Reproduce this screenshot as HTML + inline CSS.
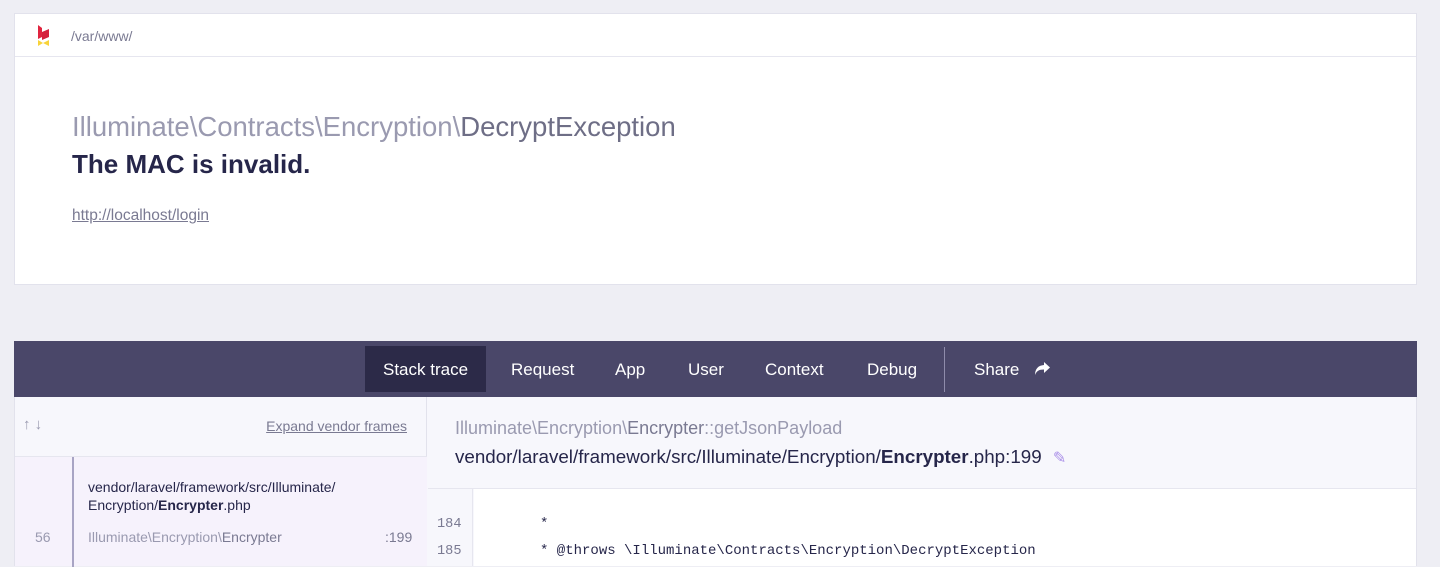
<!DOCTYPE html>
<html><head><style>
*{box-sizing:border-box;margin:0;padding:0}
body{width:1440px;height:566px;overflow:hidden;background:#eeeef4;font-family:"Liberation Sans",sans-serif;position:relative}
.top{position:absolute;left:14px;top:13px;width:1403px;height:272px;background:#fff;border:1px solid #e2e2ec}
.bar{height:43px;border-bottom:1px solid #e6e6ef;position:relative}
.path{position:absolute;left:56px;top:14px;font-size:14px;color:#7a7a92}
.exc{position:absolute;left:57px;top:97px;font-size:27.5px;color:#9a9ab0}
.exc b{font-weight:normal;color:#6e6e86}
.msg{position:absolute;left:57px;top:135px;font-size:26px;font-weight:bold;color:#26264a}
.url{position:absolute;left:57px;top:193px;font-size:15.5px;color:#7a7a92;text-decoration:underline}
.nav{position:absolute;left:14px;top:341px;width:1403px;height:56px;background:#4a4769}
.tab{position:absolute;top:5px;height:46px;line-height:48px;color:#fff;font-size:17px;padding:0 18px}
.panel{position:absolute;left:14px;top:397px;width:1403px;height:169px;background:#f7f7fc;border-left:1px solid #e2e2ec;border-right:1px solid #e2e2ec}
.left{position:absolute;left:0;top:0;width:412px;height:169px;border-right:1px solid #e2e2ec}
.code{position:absolute;left:413px;top:91px;right:0;bottom:0;border-top:1px solid #e6e6ef}
.gut{position:absolute;left:0;top:0;width:45px;bottom:0;border-right:1px solid #e6e6ef}
.cw{position:absolute;left:46px;top:0;right:0;bottom:0;background:#fff}
.mono{font-family:"Liberation Mono",monospace;font-size:14px;color:#26264a}
</style></head><body>
<div class="top">
 <div class="bar">
  <svg style="position:absolute;left:22px;top:9px" width="14" height="24" viewBox="0 0 14 24"><path d="M1 2l4 3v9l-4 2z" fill="#e0243f"/><path d="M5 9l7-3v8l-7 3z" fill="#d4203c"/><path d="M1 17l5 3 6-3v6l-6-3-5 3z" fill="#f8d33a"/></svg>
  <div class="path">/var/www/</div>
 </div>
 <div class="exc">Illuminate\Contracts\Encryption\<b>DecryptException</b></div>
 <div class="msg">The MAC is invalid.</div>
 <div class="url">http://localhost/login</div>
</div>
<div class="nav">
 <div class="tab" style="left:351px;background:#2c2a48">Stack trace</div>
 <div class="tab" style="left:479px">Request</div>
 <div class="tab" style="left:583px">App</div>
 <div class="tab" style="left:656px">User</div>
 <div class="tab" style="left:733px">Context</div>
 <div class="tab" style="left:835px">Debug</div>
 <div style="position:absolute;left:930px;top:6px;width:1px;height:45px;background:#8f8cab"></div>
 <div class="tab" style="left:942px">Share <svg style="margin-left:10px;vertical-align:-1px" width="17" height="15" viewBox="0 0 17 15"><path d="M10 1l6 5.5-6 5.5V8.5C5 8.5 2.5 10 1 14c0-6 3-9.5 9-10z" fill="#fff"/></svg></div>
</div>
<div class="panel">
 <div class="left">
  <div style="position:absolute;left:8px;top:19px;color:#9a9ab0;font-size:15px">&#8593; &#8595;</div>
  <div style="position:absolute;right:19px;top:21px;font-size:14px;color:#7a7a92;text-decoration:underline">Expand vendor frames</div>
  <div style="position:absolute;left:0;top:59px;width:412px;height:110px;background:#f6f2fc;border-top:1px solid #e6e6ef"></div>
  <div style="position:absolute;left:57px;top:60px;width:2px;height:110px;background:#a8a4c4"></div>
  <div style="position:absolute;left:73px;top:81px;font-size:14px;line-height:18px;color:#26264a">vendor/laravel/framework/src/Illuminate/<br>Encryption/<b>Encrypter</b>.php</div>
  <div style="position:absolute;left:73px;top:132px;font-size:14px;color:#9a9ab0">Illuminate\Encryption\<span style="color:#7a7a92">Encrypter</span></div>
  <div style="position:absolute;left:370px;top:132px;font-size:14px;color:#7a7a92">:199</div>
  <div style="position:absolute;left:20px;top:132px;font-size:14px;color:#9a9ab0">56</div>
 </div>
 <div style="position:absolute;left:440px;top:21px;font-size:18px;color:#9a9ab0">Illuminate\Encryption\<span style="color:#7a7a92">Encrypter</span>::getJsonPayload</div>
 <div style="position:absolute;left:440px;top:49px;font-size:18.8px;color:#26264a">vendor/laravel/framework/src/Illuminate/Encryption/<b>Encrypter</b>.php:199 <span style="color:#a98ee8;font-size:16px;margin-left:6px">&#9998;</span></div>
 <div class="code">
  <div class="gut"><div class="mono" style="position:absolute;left:9px;top:22px;color:#7a7a92;line-height:27px;font-size:13.6px">184<br>185</div></div>
  <div class="cw"><div class="mono" style="position:absolute;left:24px;top:22px;line-height:27px;white-space:pre">     *
     * @throws \Illuminate\Contracts\Encryption\DecryptException</div></div>
 </div>
</div>
</body></html>
